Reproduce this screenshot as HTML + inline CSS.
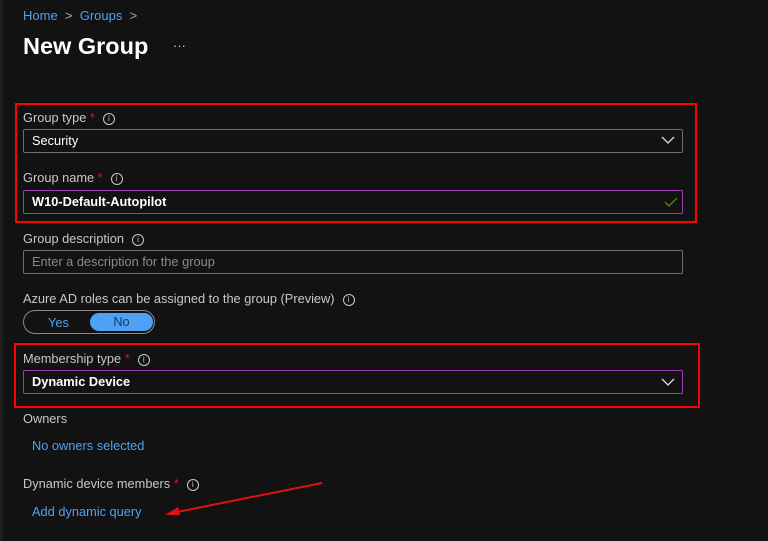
<!DOCTYPE html>
<html><head><style>
body{margin:0;width:768px;height:541px;background:#121212;font-family:"Liberation Sans",sans-serif;position:relative;overflow:hidden;color:#fff}
.a{position:absolute}
.lbl{font-size:12.8px;color:#c8c8c8}
.star{color:#e81123}
.info{display:inline-block;width:10px;height:10px;border:1px solid #c8c8c8;border-radius:50%;font-size:8px;line-height:10px;text-align:center;vertical-align:1px;margin-left:8px;color:#c8c8c8}
.box{position:absolute;left:23px;height:22px;border:1px solid #6e6e6e;border-radius:2px;font-size:12.8px;line-height:22px;padding-left:8px;box-sizing:content-box;width:650px}
.pur{border-color:#9b3bb8}
.red{position:absolute;border:2px solid #f00}
.link{color:#4ea1f3;font-size:12.8px}
</style></head><body>
<div class="a" style="left:0;top:0;width:3px;height:541px;background:#1d1d1d"></div>
<div class="a link" style="left:23px;top:8px;font-size:13px">Home <span style="color:#aaa">&nbsp;&gt;&nbsp;</span> Groups <span style="color:#aaa">&nbsp;&gt;</span></div>
<div class="a" style="left:23px;top:33px;font-size:23.5px;font-weight:bold">New Group</div>
<div class="a" style="left:173px;top:38px;font-size:13px;color:#ccc">···</div>

<div class="red" style="left:15px;top:103px;width:678px;height:116px"></div>
<div class="a lbl" style="left:23px;top:110px">Group type <span class="star">*</span><span class="info">i</span></div>
<div class="box" style="top:129px">Security</div>
<svg class="a" style="left:661px;top:136px" width="14" height="9"><path d="M1 1l6 6 6-6" stroke="#ddd" stroke-width="1.3" fill="none"/></svg>
<div class="a lbl" style="left:23px;top:170px">Group name <span class="star">*</span><span class="info">i</span></div>
<div class="box pur" style="top:190px;font-weight:bold">W10-Default-Autopilot</div>
<svg class="a" style="left:664px;top:197px" width="14" height="10"><path d="M1 5l4 4 8-8" stroke="#4a8a1a" stroke-width="1.3" fill="none"/></svg>

<div class="a lbl" style="left:23px;top:231px">Group description<span class="info">i</span></div>
<div class="box" style="top:250px;color:#8a8a8a">Enter a description for the group</div>

<div class="a lbl" style="left:23px;top:291px">Azure AD roles can be assigned to the group (Preview)<span class="info">i</span></div>
<div class="a" style="left:23px;top:310px;width:130px;height:22px;border:1px solid #8a8a8a;border-radius:12px"></div>
<div class="a link" style="left:48px;top:315px">Yes</div>
<div class="a" style="left:90px;top:313px;width:63px;height:18px;background:#4ea1f3;border-radius:9px;font-size:12.8px;line-height:18px;text-align:center;color:#1a3a60">No</div>

<div class="red" style="left:14px;top:343px;width:682px;height:61px"></div>
<div class="a lbl" style="left:23px;top:351px">Membership type <span class="star">*</span><span class="info">i</span></div>
<div class="box pur" style="top:370px;font-weight:bold">Dynamic Device</div>
<svg class="a" style="left:661px;top:378px" width="14" height="9"><path d="M1 1l6 6 6-6" stroke="#ddd" stroke-width="1.3" fill="none"/></svg>

<div class="a lbl" style="left:23px;top:411px">Owners</div>
<div class="a link" style="left:32px;top:438px">No owners selected</div>
<div class="a lbl" style="left:23px;top:476px">Dynamic device members <span class="star">*</span><span class="info">i</span></div>
<div class="a link" style="left:32px;top:504px">Add dynamic query</div>
<svg class="a" style="left:160px;top:478px" width="170" height="45"><path d="M162 5L12 35" stroke="#e01010" stroke-width="2" fill="none"/><path d="M5 37l13-8 2 8z" fill="#e01010"/></svg>
</body></html>
